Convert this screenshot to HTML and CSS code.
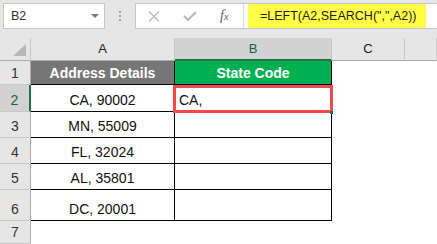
FILE: index.html
```html
<!DOCTYPE html>
<html lang="en">
<head>
    <meta charset="UTF-8">
    <meta name="viewport" content="width=device-width, initial-scale=1.0">
    <title>LEFT + SEARCH</title>
    <link rel="stylesheet" href="styles.css">
</head>
<body>
    <div class="ribbon">
        <div class="namebox">
            <span class="ref">B2</span>
            <span class="drop"></span>
        </div>
        <div class="grip"><i></i><i></i><i></i></div>
        <div class="fbar">
            <svg class="fbtn" width="12" height="11" viewBox="0 0 12 11">
                <path d="M1 0.5 L11 10.5 M11 0.5 L1 10.5" stroke="#b9b9b9" stroke-width="1.3" fill="none"/>
            </svg>
            <svg class="fbtn ok" width="14" height="10" viewBox="0 0 14 10">
                <path d="M1 5 L5 9 L13 1" stroke="#b9b9b9" stroke-width="2" fill="none"/>
            </svg>
            <span class="fx">f<small>x</small></span>
            <div class="formula">
                <span class="hl">=LEFT(A2,SEARCH(",",A2))</span>
            </div>
        </div>
    </div>

    <table class="sheet">
        <colgroup>
            <col class="c-rh">
            <col class="c-a">
            <col class="c-b">
            <col class="c-c">
            <col class="c-d">
        </colgroup>
        <thead>
            <tr class="colhead">
                <th class="corner"><span class="tri"></span></th>
                <th>A</th>
                <th class="sel">B</th>
                <th>C</th>
                <th></th>
            </tr>
        </thead>
        <tbody>
            <tr class="r1">
                <th class="rh">1</th>
                <td class="cell hd-gray">Address Details</td>
                <td class="cell hd-green">State Code</td>
                <td></td><td></td>
            </tr>
            <tr class="r2">
                <th class="rh sel">2</th>
                <td class="cell">CA, 90002</td>
                <td class="cell active">CA,<span class="selbox"></span><span class="handle"></span></td>
                <td></td><td></td>
            </tr>
            <tr class="r3">
                <th class="rh">3</th>
                <td class="cell">MN, 55009</td>
                <td class="cell"></td>
                <td></td><td></td>
            </tr>
            <tr class="r4">
                <th class="rh">4</th>
                <td class="cell">FL, 32024</td>
                <td class="cell"></td>
                <td></td><td></td>
            </tr>
            <tr class="r5">
                <th class="rh">5</th>
                <td class="cell">AL, 35801</td>
                <td class="cell"></td>
                <td></td><td></td>
            </tr>
            <tr class="r6">
                <th class="rh">6</th>
                <td class="cell">DC, 20001</td>
                <td class="cell"></td>
                <td></td><td></td>
            </tr>
            <tr class="r7">
                <th class="rh">7</th>
                <td></td><td></td><td></td><td></td>
            </tr>
        </tbody>
    </table>
</body>
</html>
```

FILE: styles.css
```css
body {
    margin: 0;
    width: 437px;
    height: 244px;
    overflow: hidden;
    background-color: #fff;
    font-family: "Liberation Sans", Arial, sans-serif;
}

/* formula bar */
.ribbon {
    height: 38px;
    box-sizing: border-box;
    padding: 3px 0 0 3px;
    background-color: #e6e6e6;
    display: flex;
    align-items: flex-start;
}

.namebox {
    width: 102px;
    height: 26px;
    box-sizing: border-box;
    background-color: #fff;
    border: 1px solid #c6c6c6;
    display: flex;
    align-items: center;
    justify-content: space-between;
    padding: 0 5px 0 7px;
    font-size: 12.5px;
    color: #333;
}

.drop {
    width: 0;
    height: 0;
    border-left: 4px solid transparent;
    border-right: 4px solid transparent;
    border-top: 4px solid #7a7a7a;
}

.grip {
    width: 30px;
    height: 26px;
    display: flex;
    flex-direction: column;
    align-items: center;
    justify-content: center;
    gap: 2px;
}

.grip i {
    width: 2px;
    height: 2px;
    background-color: #a8a8a8;
}

.fbar {
    flex: 1;
    height: 26px;
    box-sizing: border-box;
    background-color: #fff;
    border: 1px solid #c6c6c6;
    border-right: none;
    display: flex;
    align-items: center;
    padding-left: 12px;
}

.fbtn.ok {
    margin-left: 23px;
}

.fx {
    margin-left: 23px;
    width: 12px;
    font-family: "Liberation Serif", serif;
    font-style: italic;
    font-size: 14px;
    color: #5a5a5a;
}

.fx small {
    font-size: 10px;
}

.formula {
    margin-left: 11px;
    height: 100%;
    flex: 1;
    border-left: 1px solid #dcdcdc;
    padding-left: 4px;
}

.hl {
    display: inline-block;
    width: 178px;
    height: 100%;
    box-sizing: border-box;
    padding-left: 12px;
    background-color: #ffff47;
    color: #222;
    font-size: 12.5px;
    line-height: 24px;
    white-space: nowrap;
}

/* grid */
.sheet {
    width: 437px;
    table-layout: fixed;
    border-collapse: separate;
    border-spacing: 0;
    font-size: 14px;
    line-height: 16px;
    color: #111;
}

.c-rh { width: 31px; }
.c-a { width: 144px; }
.c-b { width: 157px; }
.c-c { width: 73px; }
.c-d { width: 32px; }

.sheet th,
.sheet td {
    padding: 0;
    box-sizing: border-box;
}

.colhead { height: 23px; }
.r1 { height: 24px; }
.r2 { height: 27px; }
.r3, .r4, .r5 { height: 26px; }
.r6 { height: 31px; }
.r7 { height: 23px; }

.colhead th {
    background-color: #e6e6e6;
    border-right: 1px solid #c8c8c8;
    border-bottom: 1px solid #ababab;
    font-weight: normal;
    font-size: 13px;
    color: #222;
    vertical-align: middle;
}

.colhead th.sel {
    background-color: #d2d2d2;
    color: #1d5e3a;
    border-bottom: 2px solid #217346;
}

.corner {
    position: relative;
}

.tri {
    position: absolute;
    right: 4px;
    bottom: 4px;
    width: 0;
    height: 0;
    border-left: 13px solid transparent;
    border-bottom: 12px solid #b8b8b8;
}

.rh {
    background-color: #e6e6e6;
    border-right: 1px solid #ababab;
    border-bottom: 1px solid #c8c8c8;
    font-weight: normal;
    color: #333;
    vertical-align: bottom;
    padding-bottom: 3px !important;
}

.rh.sel {
    background-color: #d2d2d2;
    color: #1d5e3a;
    border-right: 2px solid #217346;
}

.sheet td {
    vertical-align: bottom;
    padding-bottom: 3px;
}

.cell {
    border-right: 1px solid #000;
    border-bottom: 1px solid #000;
    text-align: center;
}

.hd-gray {
    background-color: #767676;
    color: #fff;
    font-weight: bold;
}

.hd-green {
    background-color: #00b050;
    color: #fff;
    font-weight: bold;
}

.active {
    position: relative;
    text-align: left;
    padding-left: 4px !important;
}

.selbox {
    position: absolute;
    left: -2px;
    top: 0;
    right: -2px;
    bottom: -2px;
    border: 3px solid #f24a4a;
}

.handle {
    position: absolute;
    right: -2px;
    bottom: -3px;
    width: 3px;
    height: 3px;
    background-color: #217346;
}
```
